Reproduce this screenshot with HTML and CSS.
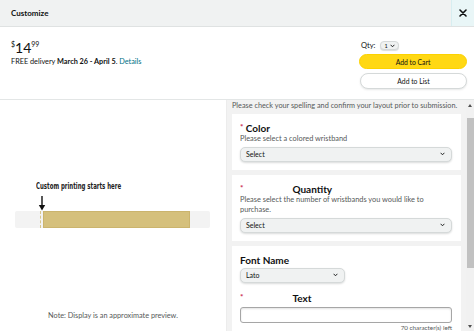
FILE: index.html
```html
<!DOCTYPE html>
<html lang="en">
<head>
<meta charset="utf-8">
<title>Customize</title>
<link rel="stylesheet" href="styles.css">
</head>
<body>
<div class="header">
  <div class="header-title">Customize</div>
  <button class="close" aria-label="Close">
    <svg width="8" height="8" viewBox="0 0 8 8"><path d="M1 1 L7 7 M7 1 L1 7" stroke="#0f1111" stroke-width="1.6" stroke-linecap="round"/></svg>
  </button>
</div>

<div class="product">
  <div class="price-block">
    <div class="price"><span class="sym">$</span><span class="whole">14</span><span class="frac">99</span></div>
    <div class="delivery">FREE delivery <b>March 26 - April 5</b>. <a class="link">Details</a></div>
  </div>
  <div class="buy">
    <div class="qty">
      <span class="qty-label">Qty:</span>
      <span class="qty-select">1 <svg width="5" height="4" viewBox="0 0 5 4"><path d="M0.6 0.8 L2.5 2.8 L4.4 0.8" fill="none" stroke="#0f1111" stroke-width="0.9"/></svg></span>
    </div>
    <button class="btn btn-cart">Add to Cart</button>
    <button class="btn btn-list">Add to List</button>
  </div>
</div>

<div class="main">
  <div class="preview">
    <div class="hint">Custom printing starts here</div>
    <svg class="arrow" width="8" height="15" viewBox="0 0 8 15"><path d="M4 0 V10" stroke="#111" stroke-width="1.4"/><path d="M0.8 9 L7.2 9 L4 14.5 Z" fill="#111"/></svg>
    <div class="strip"><div class="mark"></div><div class="band"></div></div>
    <div class="note">Note: Display is an approximate preview.</div>
  </div>

  <div class="form-pane">
    <div class="form-scroll">
      <p class="notice">Please check your spelling and confirm your layout prior to submission.</p>

      <div class="card">
        <div class="title"><span class="req">*</span> Color</div>
        <div class="desc">Please select a colored wristband</div>
        <div class="select"><span>Select</span><svg width="5" height="4" viewBox="0 0 5 4"><path d="M0.6 0.8 L2.5 2.8 L4.4 0.8" fill="none" stroke="#0f1111" stroke-width="0.9"/></svg></div>
      </div>

      <div class="card">
        <div class="title"><span class="req">*</span><span class="title-far">Quantity</span></div>
        <div class="desc desc-narrow">Please select the number of wristbands you would like to purchase.</div>
        <div class="select"><span>Select</span><svg width="5" height="4" viewBox="0 0 5 4"><path d="M0.6 0.8 L2.5 2.8 L4.4 0.8" fill="none" stroke="#0f1111" stroke-width="0.9"/></svg></div>
      </div>

      <div class="card">
        <div class="title">Font Name</div>
        <div class="select select-short"><span>Lato</span><svg width="5" height="4" viewBox="0 0 5 4"><path d="M0.6 0.8 L2.5 2.8 L4.4 0.8" fill="none" stroke="#0f1111" stroke-width="0.9"/></svg></div>
        <div class="title title-gap"><span class="req">*</span><span class="title-far">Text</span></div>
        <div class="text-input"></div>
        <div class="counter">70 character(s) left</div>
      </div>
    </div>

    <div class="scrollbar">
      <div class="sb-btn"><span class="tri-up"></span></div>
      <div class="sb-track"><div class="sb-thumb"></div></div>
      <div class="sb-btn"><span class="tri-down"></span></div>
    </div>
  </div>
</div>
</body>
</html>
```

FILE: styles.css
```css
* { box-sizing: border-box; }

html, body {
  margin: 0;
  padding: 0;
}

body {
  width: 474px;
  height: 331px;
  overflow: hidden;
  font-family: Lato, "Noto Sans", sans-serif;
  color: #0f1111;
  background: #fff;
}

/* header */
.header {
  display: flex;
  align-items: stretch;
  height: 27px;
  background: #f0f2f2;
  border-bottom: 1px solid #dfe2e2;
}
.header-title {
  flex: 1;
  display: flex;
  align-items: center;
  padding-left: 11px;
  font-size: 8px;
  font-weight: 700;
}
.close {
  width: 23px;
  height: 26px;
  margin: 0;
  padding: 0;
  border: none;
  border-left: 1px solid #d7eef1;
  background: #e9f6f7;
  display: flex;
  align-items: center;
  justify-content: center;
}

/* product row */
.product {
  display: flex;
  justify-content: space-between;
  height: 73px;
  border-bottom: 1px solid #e3e6e6;
}
.price-block {
  padding: 13px 0 0 11px;
}
.price {
  line-height: 14px;
  height: 14px;
}
.sym, .frac {
  font-size: 7px;
  vertical-align: top;
  line-height: 9px;
}
.whole {
  font-size: 14px;
}
.delivery {
  margin-top: 3px;
  font-size: 7.3px;
  line-height: 10px;
  color: #0f1111;
}
.delivery b { font-weight: 700; }
.link { color: #007185; }

.buy {
  width: 108px;
  margin-right: 7px;
  padding-top: 14px;
  display: flex;
  flex-direction: column;
}
.qty {
  display: flex;
  align-items: center;
  height: 9px;
  padding-left: 2px;
  font-size: 7.5px;
}
.qty-label { width: 19px; }
.qty-select {
  display: flex;
  align-items: center;
  justify-content: center;
  gap: 2px;
  width: 19px;
  height: 9px;
  font-size: 5.5px;
  background: #f0f2f2;
  border: 1px solid #d5d9d9;
  border-radius: 4px;
  box-shadow: 0 1px 1px rgba(15,17,17,.15);
}
.btn {
  margin: 0;
  padding: 0;
  font-family: inherit;
  font-size: 6.8px;
  color: #0f1111;
  border-radius: 8px;
  display: flex;
  align-items: center;
  justify-content: center;
}
.btn-cart {
  margin-top: 4px;
  height: 15px;
  background: #ffd814;
  border: 1px solid #fcd200;
}
.btn-list {
  margin-top: 4px;
  height: 16px;
  margin-left: 1px;
  background: #fff;
  border: 1px solid #d5d9d9;
  box-shadow: 0 1px 2px rgba(213,217,217,.6);
}

/* main area */
.main {
  display: flex;
  height: 231px;
}

.preview {
  width: 226px;
  background: #fff;
  display: flex;
  flex-direction: column;
  padding-top: 80px;
}
.hint {
  margin-left: 36px;
  font-family: "DejaVu Sans Condensed", "Liberation Sans Narrow", sans-serif;
  font-stretch: condensed;
  font-weight: 700;
  font-size: 9px;
  line-height: 12px;
  color: #222;
  white-space: nowrap;
  transform: scaleX(0.67);
  transform-origin: left center;
}
.arrow {
  display: block;
  margin: 4px 0 0 38px;
}
.strip {
  display: flex;
  align-items: stretch;
  margin-left: 15px;
  width: 195px;
  height: 17px;
  background: #f3f3f3;
  border-radius: 2px;
  padding-left: 25px;
}
.mark {
  width: 1px;
  border-left: 1px dashed #d8c78e;
}
.band {
  width: 147px;
  margin-left: 2px;
  background: #d5c07c;
  box-shadow: inset 0 0 0 1px #cbb46d;
}
.note {
  margin-top: auto;
  padding-bottom: 10px;
  text-align: center;
  font-size: 7.3px;
  line-height: 10px;
  color: #565959;
}

/* form pane */
.form-pane {
  flex: 1;
  display: flex;
  background: #f2f2f2;
  border-left: 1px solid #ececec;
}
.form-scroll {
  flex: 1;
  overflow: hidden;
  padding: 1px 5px 0 5px;
}
.notice {
  margin: 0 0 3px 0;
  font-size: 7.3px;
  line-height: 10px;
  color: #565959;
  white-space: nowrap;
}
.card {
  background: #fff;
  padding: 9px 9px 8px 8px;
  margin-bottom: 5px;
}
.title {
  font-size: 10px;
  line-height: 11px;
  font-weight: 700;
  display: flex;
  align-items: flex-start;
  white-space: pre;
}
.req {
  color: #c9294f;
  font-size: 8px;
  line-height: 9px;
}
.title-far {
  margin-left: 49px;
}
.title-gap {
  margin-top: 10px;
}
.desc {
  font-size: 7.4px;
  line-height: 10.5px;
  color: #565959;
}
.desc-narrow { max-width: 200px; }
.select {
  margin-top: 2px;
  height: 15px;
  display: flex;
  align-items: center;
  justify-content: space-between;
  padding: 0 6px 0 5px;
  background: #f0f2f2;
  border: 1px solid #d5d9d9;
  border-radius: 5px;
  box-shadow: 0 1px 2px rgba(15,17,17,.15);
  font-size: 7px;
  color: #0f1111;
}
.select-short {
  width: 105px;
  margin-top: 2px;
}
.text-input {
  margin-top: 3px;
  height: 16px;
  background: #fff;
  border: 1px solid #a6a6a6;
  border-radius: 3px;
  box-shadow: inset 0 1px 2px rgba(15,17,17,.12);
}
.counter {
  text-align: right;
  font-size: 6.3px;
  line-height: 8px;
  color: #565959;
  margin-top: 1px;
}

/* scrollbar */
.scrollbar {
  width: 8px;
  display: flex;
  flex-direction: column;
  background: #f1f1f1;
}
.sb-btn {
  height: 10px;
  display: flex;
  align-items: center;
  justify-content: center;
}
.tri-up {
  width: 0; height: 0;
  border-left: 2px solid transparent;
  border-right: 2px solid transparent;
  border-bottom: 3px solid #505050;
}
.tri-down {
  width: 0; height: 0;
  border-left: 2px solid transparent;
  border-right: 2px solid transparent;
  border-top: 3px solid #505050;
}
.sb-track {
  flex: 1;
  padding: 8px 0 0 1px;
}
.sb-thumb {
  width: 7px;
  height: 150px;
  background: #c1c1c1;
}
```
